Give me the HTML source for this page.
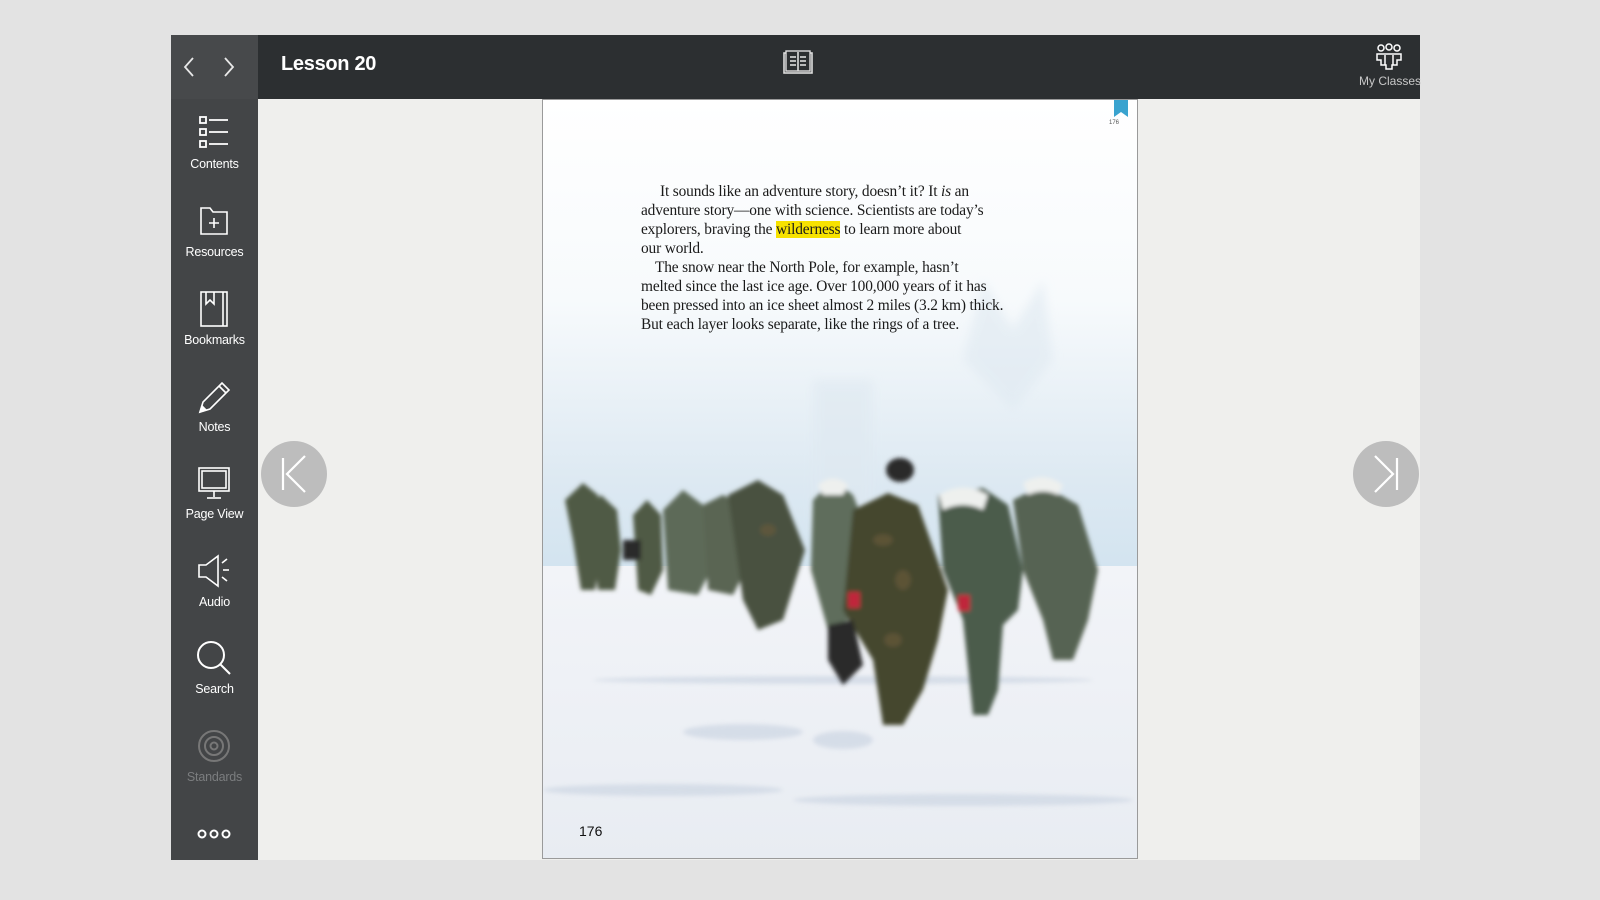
<!DOCTYPE html>
<html><head><meta charset="utf-8"><style>
*{margin:0;padding:0;box-sizing:border-box}
body{width:1600px;height:900px;background:#e3e3e3;position:relative;overflow:hidden;font-family:"Liberation Sans",sans-serif}
.abs{position:absolute}
#hdr{left:171px;top:35px;width:1249px;height:64px;background:#2c2f31}
#navbox{left:171px;top:35px;width:87px;height:64px;background:#47494b}
#side{left:171px;top:99px;width:87px;height:761px;background:#434547}
#canvas{left:258px;top:99px;width:1162px;height:761px;background:#efefed}
.lbl{position:absolute;left:171px;width:87px;text-align:center;color:#fff;font-size:12.5px;letter-spacing:-0.2px}
.ic{position:absolute;left:194px;width:40px;height:40px}
#page{left:542px;top:99px;width:596px;height:760px;border:1px solid #9a9a9a;overflow:hidden;background:linear-gradient(#ffffff 0px,#f7fafc 200px,#dde9f2 380px,#d3e4f0 466px,#f0f3f7 467px,#e9edf3 560px,#edf0f5 760px)}
.txt{position:absolute;left:98px;font-family:"Liberation Serif",serif;font-size:15.4px;color:#1a1a1a;white-space:nowrap;letter-spacing:-0.15px}
.circ{width:66px;height:66px;border-radius:50%;background:#bdbdbd}
</style></head><body>
<div id="hdr" class="abs"></div>
<div id="navbox" class="abs"></div>
<svg class="abs" style="left:171px;top:35px" width="87" height="64"><path d="M22 23 L14 32 L22 41" stroke="#e8e8e8" stroke-width="1.8" fill="none"/><path d="M54 23 L62 32 L54 41" stroke="#e8e8e8" stroke-width="1.8" fill="none"/></svg>
<div class="abs" style="left:281px;top:53px;color:#fff;font-weight:bold;font-size:20px;letter-spacing:-0.3px">Lesson 20</div>
<svg class="abs" style="left:782px;top:50px" width="32" height="26"><rect x="2" y="3" width="28" height="20" fill="none" stroke="#ddd" stroke-width="1.6"/><rect x="4" y="1" width="24" height="20" fill="#2c2f31" stroke="#ddd" stroke-width="1.4"/><line x1="16" y1="2" x2="16" y2="21" stroke="#ddd" stroke-width="1.6"/><g stroke="#ddd" stroke-width="1.6"><line x1="8" y1="7" x2="14" y2="7"/><line x1="8" y1="11" x2="14" y2="11"/><line x1="8" y1="15" x2="14" y2="15"/><line x1="18" y1="7" x2="24" y2="7"/><line x1="18" y1="11" x2="24" y2="11"/><line x1="18" y1="15" x2="24" y2="15"/></g></svg>
<svg class="abs" style="left:1375px;top:43px" width="28" height="28" fill="none" stroke="#fff" stroke-width="1.5"><circle cx="6" cy="5" r="3"/><circle cx="14" cy="4" r="3"/><circle cx="22" cy="5" r="3"/><path d="M2 11 H26 V17 H22 V22 H17 V26 H11 V22 H6 V17 H2 Z"/><line x1="10" y1="12" x2="10" y2="22"/><line x1="18" y1="12" x2="18" y2="22"/></svg>
<div class="abs" style="left:1355px;top:74px;width:70px;text-align:center;color:#c8c8c8;font-size:12px">My Classes</div>
<div id="side" class="abs"></div>
<div id="canvas" class="abs"></div>
<svg class="ic" style="top:114px" viewBox="0 0 40 40" fill="none" stroke="#fff" stroke-width="1.8"><rect x="6" y="3" width="6" height="6"/><rect x="6" y="15" width="6" height="6"/><rect x="6" y="27" width="6" height="6"/><line x1="15" y1="6" x2="34" y2="6"/><line x1="15" y1="18" x2="34" y2="18"/><line x1="15" y1="30" x2="34" y2="30"/></svg>
<div class="lbl" style="top:157px">Contents</div>
<svg class="ic" style="top:202px" viewBox="0 0 40 40" fill="none" stroke="#fff" stroke-width="1.6"><path d="M7 6 H16 L19 10 H33 V32 H7 Z"/><path d="M20 16 V26 M15 21 H25"/></svg>
<div class="lbl" style="top:245px">Resources</div>
<svg class="ic" style="top:289px" viewBox="0 0 40 40" fill="none" stroke="#fff" stroke-width="1.6"><rect x="7" y="3" width="26" height="34"/><line x1="29" y1="3" x2="29" y2="37"/><path d="M12 3 V15 L16 11 L20 15 V3"/></svg>
<div class="lbl" style="top:333px">Bookmarks</div>
<svg class="ic" style="top:377px" viewBox="0 0 40 40" fill="none" stroke="#fff" stroke-width="1.6"><path d="M6 35 L9 25 L28 6 L35 13 L16 32 Z"/><line x1="25" y1="9" x2="32" y2="16"/><path d="M6 35 L8 29 L12 33 Z" fill="#fff"/></svg>
<div class="lbl" style="top:420px">Notes</div>
<svg class="ic" style="top:464px" viewBox="0 0 40 40" fill="none" stroke="#fff" stroke-width="1.6"><rect x="5" y="4" width="30" height="23"/><rect x="8" y="7" width="24" height="17"/><line x1="20" y1="27" x2="20" y2="33"/><line x1="13" y1="34" x2="27" y2="34"/></svg>
<div class="lbl" style="top:507px">Page View</div>
<svg class="ic" style="top:551px" viewBox="0 0 40 40" fill="none" stroke="#fff" stroke-width="1.6"><path d="M5 14 H12 L24 5 V35 L12 26 H5 Z"/><line x1="28" y1="12" x2="33" y2="8"/><line x1="29" y1="19" x2="35" y2="19"/><line x1="28" y1="26" x2="33" y2="30"/></svg>
<div class="lbl" style="top:595px">Audio</div>
<svg class="ic" style="top:639px" viewBox="0 0 40 40" fill="none" stroke="#fff" stroke-width="2"><circle cx="17" cy="16" r="13"/><line x1="26.5" y1="25.5" x2="36" y2="35"/></svg>
<div class="lbl" style="top:682px">Search</div>
<svg class="ic" style="top:726px" viewBox="0 0 40 40" fill="none" stroke="#777" stroke-width="2"><circle cx="20" cy="20" r="15"/><circle cx="20" cy="20" r="9"/><circle cx="20" cy="20" r="3.5"/></svg>
<div class="lbl" style="top:770px;color:#7b7d7f">Standards</div>
<svg class="abs" style="left:194px;top:826px" width="40" height="16" fill="none" stroke="#fff" stroke-width="2"><circle cx="8" cy="8" r="3.5"/><circle cx="20" cy="8" r="3.5"/><circle cx="32" cy="8" r="3.5"/></svg>

<div id="page" class="abs">
<svg class="abs" style="left:0;top:0" width="596" height="760">
<defs><linearGradient id="sn" x1="0" y1="0" x2="0" y2="1"><stop offset="0" stop-color="#f2f4f8"/><stop offset="1" stop-color="#e8ecf2"/></linearGradient>
<filter id="bl"><feGaussianBlur stdDeviation="2"/></filter><filter id="bl2"><feGaussianBlur stdDeviation="5"/></filter></defs>
<g fill="#dfe9f1" opacity="0.6" filter="url(#bl2)"><path d="M440 180 L470 230 L500 180 L510 260 L470 310 L420 260 Z"/><rect x="270" y="280" width="60" height="150"/></g>
<rect x="0" y="466" width="596" height="300" fill="url(#sn)"/>
<g fill="#d0d9e5" opacity="0.8" filter="url(#bl)"><ellipse cx="200" cy="632" rx="60" ry="8"/><ellipse cx="300" cy="640" rx="30" ry="9"/><ellipse cx="120" cy="690" rx="120" ry="6"/><ellipse cx="420" cy="700" rx="170" ry="6"/><ellipse cx="300" cy="580" rx="250" ry="4"/></g>
<g filter="url(#bl)">
<g fill="#4f5a45">
<path d="M22 400 L40 383 L55 395 L60 440 L52 490 L38 490 L30 440 Z"/>
<path d="M45 410 L58 395 L74 410 L78 450 L72 490 L55 490 L50 450 Z"/>
<path d="M90 415 L104 400 L118 415 L120 470 L108 495 L95 490 Z"/>
<path d="M120 410 L140 390 L160 405 L168 470 L155 495 L125 490 Z" fill="#5d6a58"/>
<path d="M160 405 L180 395 L190 400 L200 475 L190 495 L165 490 Z" fill="#5a6552"/>
<path d="M185 395 L215 380 L240 395 L262 450 L240 520 L215 530 L200 500 Z" fill="#4a5140"/>
<path d="M270 400 L290 380 L310 395 L328 440 L305 520 L285 530 L268 470 Z" fill="#5f6d5c"/>
<path d="M310 410 L345 393 L375 405 L405 490 L395 540 L380 590 L360 625 L340 625 L330 560 L300 510 Z" fill="#45472f"/>
<path d="M395 395 L440 388 L465 405 L480 470 L475 510 L460 525 L455 590 L445 615 L430 615 L420 520 L400 470 Z" fill="#4b5b4c"/>
<path d="M470 400 L500 385 L535 405 L555 470 L545 520 L530 560 L510 560 L500 520 L480 470 Z" fill="#566452"/>
</g>
<g fill="#6b5a3a" opacity="0.6"><ellipse cx="340" cy="440" rx="10" ry="6"/><ellipse cx="360" cy="480" rx="8" ry="10"/><ellipse cx="225" cy="430" rx="8" ry="6"/><ellipse cx="350" cy="540" rx="9" ry="7"/></g>
<g fill="#2a2a2a"><ellipse cx="357" cy="370" rx="14" ry="12"/><path d="M285 525 L310 520 L320 565 L300 585 L285 560 Z"/><path d="M80 440 L98 440 L98 460 L80 460 Z"/></g>
<g fill="#eef0ee"><path d="M396 395 Q420 380 445 395 L440 410 Q420 400 400 410 Z"/><path d="M480 383 Q500 370 520 385 L515 395 Q500 388 485 395 Z"/><path d="M275 385 Q290 372 305 385 L300 395 L280 395 Z"/></g>
<g fill="#c0283a"><rect x="305" y="492" width="12" height="16"/><rect x="415" y="495" width="12" height="16"/></g>
</g>
</svg>
<div class="txt" style="top:83px;left:117px">It sounds like an adventure story, doesn’t it? It <i>is</i> an</div>
<div class="txt" style="top:102px">adventure story—one with science. Scientists are today’s</div>
<div class="txt" style="top:121px">explorers, braving the <span style="background:#f7e200">wilderness</span> to learn more about</div>
<div class="txt" style="top:140px">our world.</div>
<div class="txt" style="top:159px;left:112px">The snow near the North Pole, for example, hasn’t</div>
<div class="txt" style="top:178px">melted since the last ice age. Over 100,000 years of it has</div>
<div class="txt" style="top:197px">been pressed into an ice sheet almost 2 miles (3.2 km) thick.</div>
<div class="txt" style="top:216px">But each layer looks separate, like the rings of a tree.</div>
<div class="abs" style="left:36px;top:723px;font-size:14px;color:#111">176</div>
<svg class="abs" style="left:570px;top:0" width="16" height="20"><path d="M1 0 H15 V17 L8 12 L1 17 Z" fill="#3aa3cf"/></svg>
<div class="abs" style="left:566px;top:20px;font-size:6px;color:#555">176</div>
</div>

<div class="abs circ" style="left:261px;top:441px"></div>
<svg class="abs" style="left:261px;top:441px" width="66" height="66" fill="none" stroke="#fff" stroke-width="2.2"><line x1="22" y1="17" x2="22" y2="49"/><path d="M44 15 L26 33 L44 51"/></svg>
<div class="abs circ" style="left:1353px;top:441px"></div>
<svg class="abs" style="left:1353px;top:441px" width="66" height="66" fill="none" stroke="#fff" stroke-width="2.2"><line x1="44" y1="17" x2="44" y2="49"/><path d="M22 15 L40 33 L22 51"/></svg>
</body></html>
